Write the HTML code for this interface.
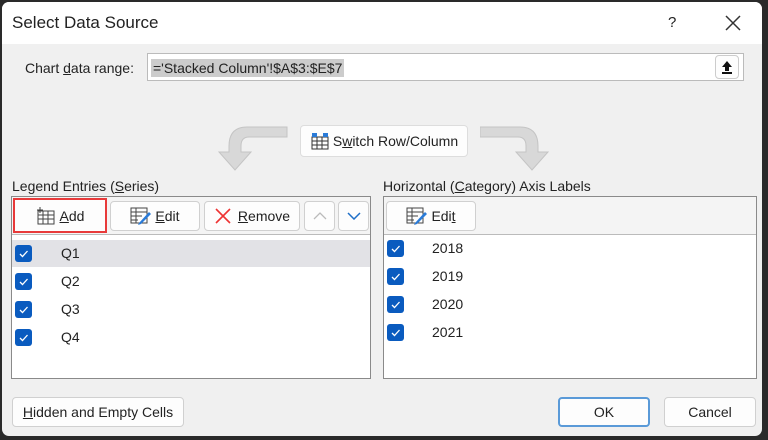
<!DOCTYPE html>
<html><head><style>
*{box-sizing:border-box;margin:0;padding:0}
body{width:768px;height:440px;background:#2a2a2a;position:relative;overflow:hidden;font-family:"Liberation Sans",sans-serif;font-size:13px;color:#222}
.a{position:absolute}
#dlg{left:2px;top:2px;width:760px;height:434px;background:#f0f0f0;border-radius:7px;overflow:hidden}
#title{left:0;top:0;width:760px;height:42px;background:#fff}
.btn{position:absolute;background:#fdfdfd;border:1px solid #d0d0d0;border-radius:4px;display:flex;align-items:center;justify-content:center;font-size:14px;color:#222}
.panel{position:absolute;background:#fff;border:1px solid #8a8a8a}
.cb{position:absolute;width:17px;height:17px;background:#0a5bbf;border-radius:3px}
.cb svg{position:absolute;left:3px;top:3px}
.lbl{position:absolute;font-size:14px}
u{text-decoration:underline}
</style></head><body>
<div id="dlg" class="a">
 <div id="title" class="a">
  <div class="a" style="left:10px;top:11px;font-size:17px;color:#222">Select Data Source</div>
  <div class="a" style="left:666px;top:12px;font-size:15px">?</div>
  <svg class="a" style="left:723px;top:13px" width="16" height="16"><path d="M1 1L15 15M15 1L1 15" stroke="#333" stroke-width="1.5"/></svg>
 </div>
 <div class="a" style="left:23px;top:58px;font-size:14px">Chart <u>d</u>ata range:</div>
 <div class="a" style="left:145px;top:51px;width:597px;height:28px;background:#fff;border:1px solid #bbb"></div>
 <div class="a" style="left:149px;top:57px;height:18px;background:#ccc;font-size:14px;line-height:18px;padding:0 2px">='Stacked Column'!$A$3:$E$7</div>
 <div class="btn" style="left:713px;top:53px;width:24px;height:24px;border-color:#ccc"><svg width="12" height="14"><path d="M6 1L1 7H4V11H8V7H11Z" fill="#111"/><rect x="1" y="12" width="10" height="2" fill="#111"/></svg></div>
 <!-- arrows -->
 <svg class="a" style="left:205px;top:122px" width="90" height="50"><path d="M80 3H40Q22 3 22 22V28H12L28 46L44 28H34V22Q34 13 42 13H80Z" fill="#d8d8d8" stroke="#c4c4c4"/></svg>
 <svg class="a" style="left:478px;top:122px" width="90" height="50"><path d="M0 3H40Q58 3 58 22V28H68L52 46L36 28H46V22Q46 13 38 13H0Z" fill="#d8d8d8" stroke="#c4c4c4"/></svg>
 <div class="btn" style="left:298px;top:123px;width:168px;height:32px;border-color:#ddd"><svg width="20" height="18" style="margin-right:3px"><rect x="2" y="5" width="16" height="12" fill="none" stroke="#333"/><path d="M2 9H18M2 13H18M7 5V17M12 5V17" stroke="#333"/><rect x="2" y="1" width="5" height="4" fill="#2a7bd8"/><rect x="13" y="1" width="5" height="4" fill="#2a7bd8"/></svg>S<u>w</u>itch Row/Column</div>
 <div class="a" style="left:10px;top:176px;font-size:14px">Legend Entries (<u>S</u>eries)</div>
 <div class="a" style="left:381px;top:176px;font-size:14px">Horizontal (<u>C</u>ategory) Axis Labels</div>
 <div class="panel" style="left:9px;top:194px;width:360px;height:183px">
  <div class="a" style="left:0;top:0;width:358px;height:38px;border-bottom:1px solid #bbb;background:#f4f4f4"></div>
  <div class="btn" style="left:1px;top:1px;width:94px;height:35px;border:2px solid #e83a3a;border-radius:0"><svg width="20" height="18" style="margin-right:4px"><rect x="2" y="4" width="16" height="13" fill="none" stroke="#444"/><path d="M2 8H18M2 12H18M7 4V17M12 4V17" stroke="#444"/><path d="M4 0V6M1 3H7" stroke="#444"/></svg><u>A</u>dd</div>
  <div class="btn" style="left:98px;top:4px;width:90px;height:30px"><svg width="22" height="20" style="margin-right:3px"><rect x="1" y="2" width="16" height="15" fill="none" stroke="#444"/><path d="M1 6H17M1 10H12M1 14H8M6 2V17" stroke="#444"/><path d="M19 6L9 17L8 19L11 18L21 8Z" fill="#2a7bd8"/></svg><u>E</u>dit</div>
  <div class="btn" style="left:192px;top:4px;width:96px;height:30px"><svg width="18" height="18" style="margin-right:6px"><path d="M2 2L16 16M16 2L2 16" stroke="#e33" stroke-width="1.6"/></svg><u>R</u>emove</div>
  <div class="btn" style="left:292px;top:4px;width:31px;height:30px"><svg width="14" height="8"><path d="M1 7L7 1L13 7" fill="none" stroke="#bbb" stroke-width="1.3"/></svg></div>
  <div class="btn" style="left:326px;top:4px;width:31px;height:30px"><svg width="14" height="8"><path d="M1 1L7 7L13 1" fill="none" stroke="#1f6fc8" stroke-width="1.5"/></svg></div>
  <div class="a" style="left:0;top:43px;width:358px;height:27px;background:#e2e2e6"></div>
  <div class="cb" style="left:3px;top:48px"><svg width="11" height="11"><path d="M2 6L4.5 8.5L9.5 3" fill="none" stroke="#fff" stroke-width="1.3"/></svg></div><div class="lbl" style="left:49px;top:48px">Q1</div>
  <div class="cb" style="left:3px;top:76px"><svg width="11" height="11"><path d="M2 6L4.5 8.5L9.5 3" fill="none" stroke="#fff" stroke-width="1.3"/></svg></div><div class="lbl" style="left:49px;top:76px">Q2</div>
  <div class="cb" style="left:3px;top:104px"><svg width="11" height="11"><path d="M2 6L4.5 8.5L9.5 3" fill="none" stroke="#fff" stroke-width="1.3"/></svg></div><div class="lbl" style="left:49px;top:104px">Q3</div>
  <div class="cb" style="left:3px;top:132px"><svg width="11" height="11"><path d="M2 6L4.5 8.5L9.5 3" fill="none" stroke="#fff" stroke-width="1.3"/></svg></div><div class="lbl" style="left:49px;top:132px">Q4</div>
 </div>
 <div class="panel" style="left:381px;top:194px;width:374px;height:183px">
  <div class="a" style="left:0;top:0;width:372px;height:38px;border-bottom:1px solid #bbb;background:#f4f4f4"></div>
  <div class="btn" style="left:2px;top:4px;width:90px;height:30px"><svg width="22" height="20" style="margin-right:3px"><rect x="1" y="2" width="16" height="15" fill="none" stroke="#444"/><path d="M1 6H17M1 10H12M1 14H8M6 2V17" stroke="#444"/><path d="M19 6L9 17L8 19L11 18L21 8Z" fill="#2a7bd8"/></svg>Edi<u>t</u></div>
  <div class="cb" style="left:3px;top:43px"><svg width="11" height="11"><path d="M2 6L4.5 8.5L9.5 3" fill="none" stroke="#fff" stroke-width="1.3"/></svg></div><div class="lbl" style="left:48px;top:43px">2018</div>
  <div class="cb" style="left:3px;top:71px"><svg width="11" height="11"><path d="M2 6L4.5 8.5L9.5 3" fill="none" stroke="#fff" stroke-width="1.3"/></svg></div><div class="lbl" style="left:48px;top:71px">2019</div>
  <div class="cb" style="left:3px;top:99px"><svg width="11" height="11"><path d="M2 6L4.5 8.5L9.5 3" fill="none" stroke="#fff" stroke-width="1.3"/></svg></div><div class="lbl" style="left:48px;top:99px">2020</div>
  <div class="cb" style="left:3px;top:127px"><svg width="11" height="11"><path d="M2 6L4.5 8.5L9.5 3" fill="none" stroke="#fff" stroke-width="1.3"/></svg></div><div class="lbl" style="left:48px;top:127px">2021</div>
 </div>
 <div class="btn" style="left:10px;top:395px;width:172px;height:30px"><u>H</u>idden and Empty Cells</div>
 <div class="btn" style="left:556px;top:395px;width:92px;height:30px;border:2px solid #5a9ad8">OK</div>
 <div class="btn" style="left:662px;top:395px;width:92px;height:30px">Cancel</div>
</div>
</body></html>
